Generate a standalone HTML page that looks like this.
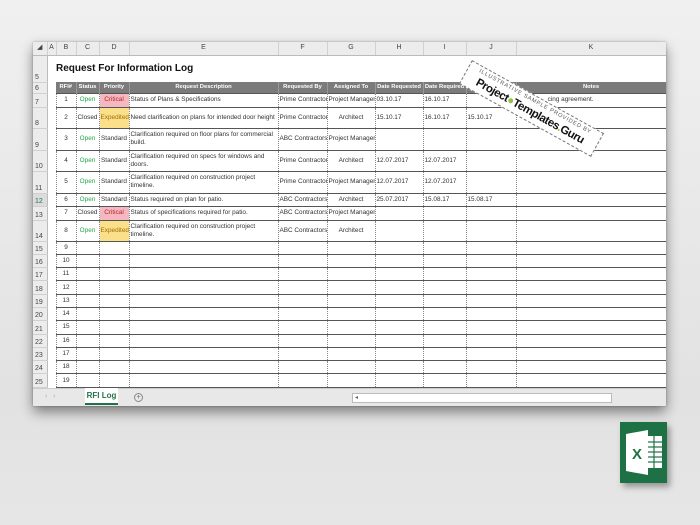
<!DOCTYPE html>
<html><head><style>
*{margin:0;padding:0;box-sizing:border-box}
body{width:700px;height:525px;overflow:hidden;background:linear-gradient(#f0f0f0 0%,#e2e2e2 75%,#e6e6e6 100%);font-family:"Liberation Sans",sans-serif;position:relative}
.win{position:absolute;left:33px;top:42px;width:633px;height:364px;background:#fff;box-shadow:0 6px 12px rgba(0,0,0,.45),0 0 2px rgba(0,0,0,.3);overflow:hidden}
table{border-collapse:collapse;table-layout:fixed;position:absolute;left:0;top:0;width:633px}
td{font-size:6.4px;color:#333;overflow:hidden;white-space:nowrap;padding:0 1px;line-height:8px}
.ch td{background:#ececec;border-right:1px solid #d0d0d0;border-bottom:1px solid #bbb;text-align:center;font-size:7px;color:#444;height:13px}
.rn{background:#ececec;border-right:1px solid #bbb;border-bottom:1px solid #d0d0d0;font-size:7px;color:#444;vertical-align:bottom;padding-left:2px}
.g{border:1px solid #555;border-left:1px dotted #888;border-right:1px dotted #888}
.c{text-align:center}
.h td.hh{background:#7b7b7b;color:#fff;font-weight:bold;text-align:center;font-size:5.8px;border-right:1px solid #999}
.op{color:#21a846}
.cr{background:#f4b8c0;color:#c0202a;text-align:center}
.ex{background:#fbe08c;color:#a36b00;text-align:center}
.tab{position:absolute;left:0;top:346px;width:633px;height:18px;background:#e8e8e8;border-top:1px solid #ccc}
</style></head><body>
<div class="win">
<table>
<colgroup><col style="width:14px"><col style="width:9px"><col style="width:20px"><col style="width:23px"><col style="width:30px"><col style="width:149px"><col style="width:49px"><col style="width:48px"><col style="width:48px"><col style="width:43px"><col style="width:50px"><col style="width:150px"></colgroup>
<tr class="ch"><td>◢</td><td>A</td><td>B</td><td>C</td><td>D</td><td>E</td><td>F</td><td>G</td><td>H</td><td>I</td><td>J</td><td>K</td></tr>
<tr style="height:27px"><td class="rn">5</td><td></td><td colspan="10" style="font-size:10px;font-weight:bold;color:#111;vertical-align:middle;padding-left:0;line-height:12px">Request For Information Log</td></tr>
<tr class="h" style="height:11px"><td class="rn">6</td><td></td><td class="hh">RFI#</td><td class="hh">Status</td><td class="hh">Priority</td><td class="hh">Request Description</td><td class="hh">Requested By</td><td class="hh">Assigned To</td><td class="hh">Date Requested</td><td class="hh">Date Required</td><td class="hh"></td><td class="hh">Notes</td></tr>
<tr style="height:14px"><td class="rn">7</td><td></td><td class="g c">1</td><td class="g c op">Open</td><td class="g cr">Critical</td><td class="g">Status of Plans &amp; Specifications</td><td class="g">Prime Contractor</td><td class="g">Project Manager</td><td class="g">03.10.17</td><td class="g">16.10.17</td><td class="g"></td><td class="g">&nbsp;&nbsp;&nbsp;&nbsp;&nbsp;&nbsp;&nbsp;&nbsp;&nbsp;&nbsp;&nbsp;&nbsp;&nbsp;&nbsp;&nbsp;&nbsp;&nbsp;cing agreement.</td></tr>
<tr style="height:21px"><td class="rn">8</td><td></td><td class="g c">2</td><td class="g c">Closed</td><td class="g ex">Expedited</td><td class="g">Need clarification on plans for intended door height</td><td class="g">Prime Contractor</td><td class="g c">Architect</td><td class="g">15.10.17</td><td class="g">16.10.17</td><td class="g">15.10.17</td><td class="g"></td></tr>
<tr style="height:22px"><td class="rn">9</td><td></td><td class="g c">3</td><td class="g c op">Open</td><td class="g c">Standard</td><td class="g">Clarification required on floor plans for commercial<br>build.</td><td class="g c">ABC Contractors</td><td class="g">Project Manager</td><td class="g"></td><td class="g"></td><td class="g"></td><td class="g"></td></tr>
<tr style="height:21px"><td class="rn">10</td><td></td><td class="g c">4</td><td class="g c op">Open</td><td class="g c">Standard</td><td class="g">Clarification required on specs for windows and<br>doors.</td><td class="g">Prime Contractor</td><td class="g c">Architect</td><td class="g">12.07.2017</td><td class="g">12.07.2017</td><td class="g"></td><td class="g"></td></tr>
<tr style="height:22px"><td class="rn">11</td><td></td><td class="g c">5</td><td class="g c op">Open</td><td class="g c">Standard</td><td class="g">Clarification required on construction project<br>timeline.</td><td class="g">Prime Contractor</td><td class="g">Project Manager</td><td class="g">12.07.2017</td><td class="g">12.07.2017</td><td class="g"></td><td class="g"></td></tr>
<tr style="height:13px"><td class="rn" style="color:#217346;background:#dcdcdc">12</td><td></td><td class="g c">6</td><td class="g c op">Open</td><td class="g c">Standard</td><td class="g">Status required on plan for patio.</td><td class="g c">ABC Contractors</td><td class="g c">Architect</td><td class="g">25.07.2017</td><td class="g">15.08.17</td><td class="g">15.08.17</td><td class="g"></td></tr>
<tr style="height:14px"><td class="rn">13</td><td></td><td class="g c">7</td><td class="g c">Closed</td><td class="g cr">Critical</td><td class="g">Status of specifications required for patio.</td><td class="g c">ABC Contractors</td><td class="g">Project Manager</td><td class="g"></td><td class="g"></td><td class="g"></td><td class="g"></td></tr>
<tr style="height:21px"><td class="rn">14</td><td></td><td class="g c">8</td><td class="g c op">Open</td><td class="g ex">Expedited</td><td class="g">Clarification required on construction project<br>timeline.</td><td class="g c">ABC Contractors</td><td class="g c">Architect</td><td class="g"></td><td class="g"></td><td class="g"></td><td class="g"></td></tr>
<tr style="height:13.3px"><td class="rn">15</td><td></td><td class="g c">9</td><td class="g"></td><td class="g"></td><td class="g"></td><td class="g"></td><td class="g"></td><td class="g"></td><td class="g"></td><td class="g"></td><td class="g"></td></tr>
<tr style="height:13.3px"><td class="rn">16</td><td></td><td class="g c">10</td><td class="g"></td><td class="g"></td><td class="g"></td><td class="g"></td><td class="g"></td><td class="g"></td><td class="g"></td><td class="g"></td><td class="g"></td></tr>
<tr style="height:13.3px"><td class="rn">17</td><td></td><td class="g c">11</td><td class="g"></td><td class="g"></td><td class="g"></td><td class="g"></td><td class="g"></td><td class="g"></td><td class="g"></td><td class="g"></td><td class="g"></td></tr>
<tr style="height:13.3px"><td class="rn">18</td><td></td><td class="g c">12</td><td class="g"></td><td class="g"></td><td class="g"></td><td class="g"></td><td class="g"></td><td class="g"></td><td class="g"></td><td class="g"></td><td class="g"></td></tr>
<tr style="height:13.3px"><td class="rn">19</td><td></td><td class="g c">13</td><td class="g"></td><td class="g"></td><td class="g"></td><td class="g"></td><td class="g"></td><td class="g"></td><td class="g"></td><td class="g"></td><td class="g"></td></tr>
<tr style="height:13.3px"><td class="rn">20</td><td></td><td class="g c">14</td><td class="g"></td><td class="g"></td><td class="g"></td><td class="g"></td><td class="g"></td><td class="g"></td><td class="g"></td><td class="g"></td><td class="g"></td></tr>
<tr style="height:13.3px"><td class="rn">21</td><td></td><td class="g c">15</td><td class="g"></td><td class="g"></td><td class="g"></td><td class="g"></td><td class="g"></td><td class="g"></td><td class="g"></td><td class="g"></td><td class="g"></td></tr>
<tr style="height:13.3px"><td class="rn">22</td><td></td><td class="g c">16</td><td class="g"></td><td class="g"></td><td class="g"></td><td class="g"></td><td class="g"></td><td class="g"></td><td class="g"></td><td class="g"></td><td class="g"></td></tr>
<tr style="height:13.3px"><td class="rn">23</td><td></td><td class="g c">17</td><td class="g"></td><td class="g"></td><td class="g"></td><td class="g"></td><td class="g"></td><td class="g"></td><td class="g"></td><td class="g"></td><td class="g"></td></tr>
<tr style="height:13.3px"><td class="rn">24</td><td></td><td class="g c">18</td><td class="g"></td><td class="g"></td><td class="g"></td><td class="g"></td><td class="g"></td><td class="g"></td><td class="g"></td><td class="g"></td><td class="g"></td></tr>
<tr style="height:13.3px"><td class="rn">25</td><td></td><td class="g c">19</td><td class="g"></td><td class="g"></td><td class="g"></td><td class="g"></td><td class="g"></td><td class="g"></td><td class="g"></td><td class="g"></td><td class="g"></td></tr>
</table>
<div class="tab">
<span style="position:absolute;left:12px;top:4px;font-size:7px;color:#aaa">‹ &nbsp; ›</span>
<div style="position:absolute;left:52px;top:-1px;width:33px;height:17px;background:#fff;border-bottom:2px solid #217346;font-size:8px;font-weight:bold;color:#217346;text-align:center;line-height:15px">RFI Log</div>
<div style="position:absolute;left:101px;top:4px;width:9px;height:9px;border:1px solid #888;border-radius:50%;font-size:7px;line-height:7px;text-align:center;color:#666">+</div>
<div style="position:absolute;left:319px;top:4px;width:260px;height:10px;background:#fff;border:1px solid #bbb;font-size:6px;line-height:8px;padding-left:2px;color:#666">◂</div>
</div>
</div>
<div style="position:absolute;left:456px;top:95px;width:151px;height:27px;transform:rotate(29deg);background:#fff;border:1.5px dashed #777;text-align:center;white-space:nowrap;overflow:hidden">
<div style="font-size:5.6px;letter-spacing:0.8px;color:#555;line-height:8px;margin-top:1px">ILLUSTRATIVE SAMPLE PROVIDED BY</div>
<div style="font-size:11.5px;font-weight:bold;color:#111;line-height:14px;letter-spacing:-0.5px">Project<span style="color:#8dc63f">●</span>Templates<span style="color:#8dc63f">.</span>Guru</div>
</div>
<div style="position:absolute;left:620px;top:422px;width:47px;height:61px;background:#1e7145;box-shadow:3px 4px 6px rgba(0,0,0,.35)">
<svg width="47" height="61" viewBox="0 0 47 61"><path d="M6 12 L28 8 L28 53 L6 49 Z" fill="#fff"/><rect x="28" y="14" width="14" height="32" fill="#fff"/><g stroke="#1e7145" stroke-width="1.2"><line x1="28" y1="20" x2="42" y2="20"/><line x1="28" y1="25" x2="42" y2="25"/><line x1="28" y1="30" x2="42" y2="30"/><line x1="28" y1="35" x2="42" y2="35"/><line x1="28" y1="40" x2="42" y2="40"/><line x1="34" y1="14" x2="34" y2="46"/></g><text x="17" y="37" font-family="Liberation Sans" font-weight="bold" font-size="15" fill="#1e7145" text-anchor="middle">X</text></svg>
</div>
</body></html>
